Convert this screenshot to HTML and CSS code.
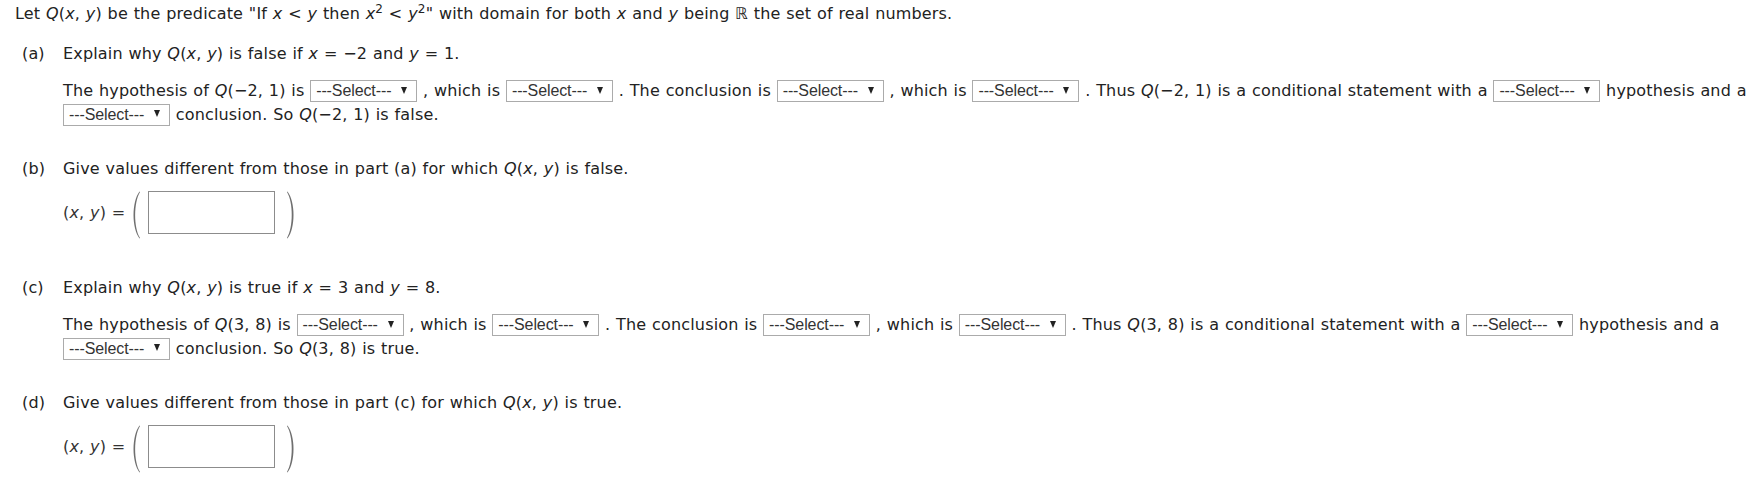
FILE: index.html
```html
<!DOCTYPE html>
<html>
<head>
<meta charset="utf-8">
<link rel="stylesheet" href="styles.css">
</head>
<body>
<div class="question">
  <p class="intro">Let <i>Q</i>(<i>x</i>, <i>y</i>) be the predicate "If <i>x</i> &lt; <i>y</i> then <i>x</i><sup>2</sup> &lt; <i>y</i><sup>2</sup>" with domain for both <i>x</i> and <i>y</i> being ℝ the set of real numbers.</p>

  <div class="part part-a">
    <span class="label">(a)</span>
    <div class="content">
      <p class="prompt">Explain why <i>Q</i>(<i>x</i>, <i>y</i>) is false if <i>x</i> = −2 and <i>y</i> = 1.</p>
      <p class="fill">The hypothesis of <i>Q</i>(−2, 1) is <span class="sel"><span class="sel-text">---Select---</span><span class="arrow"></span></span> , which is <span class="sel"><span class="sel-text">---Select---</span><span class="arrow"></span></span> . The conclusion is <span class="sel"><span class="sel-text">---Select---</span><span class="arrow"></span></span> , which is <span class="sel"><span class="sel-text">---Select---</span><span class="arrow"></span></span> . Thus <i>Q</i>(−2, 1) is a conditional statement with a <span class="sel"><span class="sel-text">---Select---</span><span class="arrow"></span></span> hypothesis and a <span class="sel"><span class="sel-text">---Select---</span><span class="arrow"></span></span> conclusion. So <i>Q</i>(−2, 1) is false.</p>
    </div>
  </div>

  <div class="part part-b">
    <span class="label">(b)</span>
    <div class="content">
      <p class="prompt">Give values different from those in part (a) for which <i>Q</i>(<i>x</i>, <i>y</i>) is false.</p>
      <div class="answer">
        <span class="pair">(<i>x</i>, <i>y</i>) =</span>
        <svg class="paren" width="11" height="48" viewBox="0 0 11 48"><path d="M9.5 0.5 C1.5 11 1.5 37 9.5 47.5 L10 47 C3.6 36.5 3.6 11.5 10 1 Z" fill="#6f6f6f"/></svg>
        <span class="box"></span>
        <svg class="paren" width="11" height="48" viewBox="0 0 11 48"><path d="M1.5 0.5 C9.5 11 9.5 37 1.5 47.5 L1 47 C7.4 36.5 7.4 11.5 1 1 Z" fill="#6f6f6f"/></svg>
      </div>
    </div>
  </div>

  <div class="part part-c">
    <span class="label">(c)</span>
    <div class="content">
      <p class="prompt">Explain why <i>Q</i>(<i>x</i>, <i>y</i>) is true if <i>x</i> = 3 and <i>y</i> = 8.</p>
      <p class="fill">The hypothesis of <i>Q</i>(3, 8) is <span class="sel"><span class="sel-text">---Select---</span><span class="arrow"></span></span> , which is <span class="sel"><span class="sel-text">---Select---</span><span class="arrow"></span></span> . The conclusion is <span class="sel"><span class="sel-text">---Select---</span><span class="arrow"></span></span> , which is <span class="sel"><span class="sel-text">---Select---</span><span class="arrow"></span></span> . Thus <i>Q</i>(3, 8) is a conditional statement with a <span class="sel"><span class="sel-text">---Select---</span><span class="arrow"></span></span> hypothesis and a <span class="sel"><span class="sel-text">---Select---</span><span class="arrow"></span></span> conclusion. So <i>Q</i>(3, 8) is true.</p>
    </div>
  </div>

  <div class="part part-d">
    <span class="label">(d)</span>
    <div class="content">
      <p class="prompt">Give values different from those in part (c) for which <i>Q</i>(<i>x</i>, <i>y</i>) is true.</p>
      <div class="answer">
        <span class="pair">(<i>x</i>, <i>y</i>) =</span>
        <svg class="paren" width="11" height="48" viewBox="0 0 11 48"><path d="M9.5 0.5 C1.5 11 1.5 37 9.5 47.5 L10 47 C3.6 36.5 3.6 11.5 10 1 Z" fill="#6f6f6f"/></svg>
        <span class="box"></span>
        <svg class="paren" width="11" height="48" viewBox="0 0 11 48"><path d="M1.5 0.5 C9.5 11 9.5 37 1.5 47.5 L1 47 C7.4 36.5 7.4 11.5 1 1 Z" fill="#6f6f6f"/></svg>
      </div>
    </div>
  </div>
</div>
</body>
</html>
```

FILE: styles.css
```css
html, body {
  margin: 0;
  padding: 0;
  background: #ffffff;
}

body {
  font-family: "DejaVu Sans", Verdana, sans-serif;
  font-size: 16px;
  letter-spacing: 0.16px;
  word-spacing: 0.5px;
  color: #222222;
}

.question {
  padding: 5px 0 0 0;
}

p {
  margin: 0;
}

i {
  font-style: italic;
}

sup {
  font-size: 12px;
  line-height: 0;
  vertical-align: 6px;
}

.intro {
  line-height: 18px;
  padding-left: 15px;
}

.part {
  display: flex;
  padding-left: 22px;
  margin-top: 22px;
}

.part-b,
.part-d {
  margin-top: 34px;
}

.part-c {
  margin-top: 40px;
}

.label {
  flex: 0 0 41px;
  line-height: 18px;
}

.content {
  flex: 1 1 auto;
  min-width: 0;
}

.prompt {
  line-height: 18px;
}

.fill {
  margin-top: 16px;
  line-height: 23.5px;
}

.sel {
  display: inline-flex;
  align-items: baseline;
  box-sizing: border-box;
  width: 107px;
  height: 22px;
  border: 1px solid #ababab;
  background: #ffffff;
  padding: 0 0 0 5px;
  font-family: "Liberation Sans", Arial, sans-serif;
  font-size: 16px;
  line-height: 20px;
  color: #333333;
  vertical-align: baseline;
  letter-spacing: -0.1px;
  word-spacing: 0;
}

.sel-text {
  flex: 1 1 auto;
}

.arrow {
  width: 0;
  height: 0;
  border-left: 3.5px solid transparent;
  border-right: 3.5px solid transparent;
  border-top: 7px solid #222222;
  margin-right: 9px;
  align-self: center;
  margin-top: -2px;
}

.answer {
  display: flex;
  align-items: flex-start;
  margin-top: 13px;
  height: 48px;
}

.pair {
  line-height: 18px;
  color: #333333;
  align-self: center;
  margin-top: -4px;
}

.paren {
  display: block;
  flex: 0 0 auto;
}

.answer .paren:first-of-type {
  margin-left: 5px;
  margin-right: 7px;
}

.answer .paren:last-of-type {
  margin-left: 11px;
}

.box {
  display: block;
  box-sizing: border-box;
  width: 127px;
  height: 43px;
  border: 1px solid #8c8c8c;
  background: #ffffff;
}
```
